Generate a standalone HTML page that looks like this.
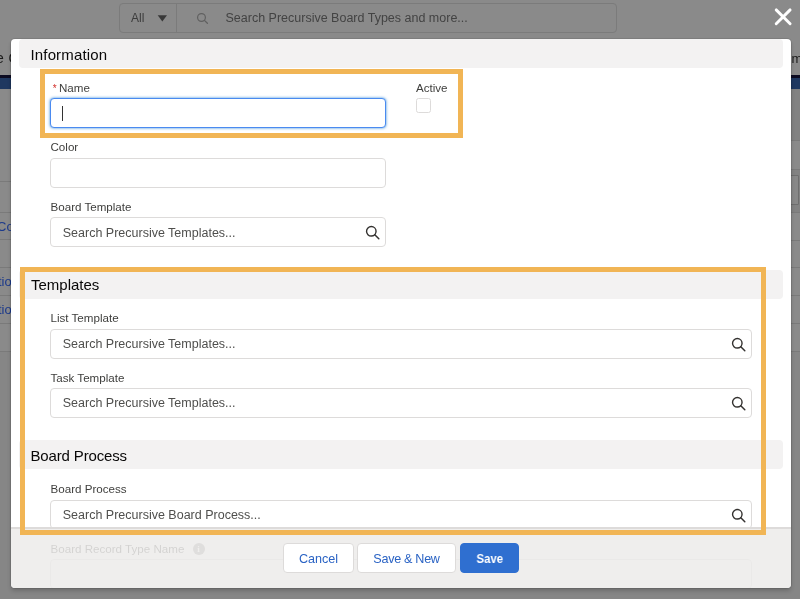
<!DOCTYPE html>
<html>
<head>
<meta charset="utf-8">
<title>New Precursive Board Type</title>
<style>
*{box-sizing:border-box;margin:0;padding:0}
html,body{width:800px;height:599px;overflow:hidden}
body{background:#8a8a8a;opacity:.999;font-family:"Liberation Sans",sans-serif;position:relative;color:#181818}
.abs{position:absolute}
/* background (dimmed page) */
.gsearch{will-change:transform;left:119px;top:3px;width:498px;height:30px;border:1px solid #7b7b7b;border-radius:4px;background:#8a8a8a}
.gsearch .div{left:56px;top:0;width:1px;height:28px;background:#7b7b7b}
.gsearch .all{left:11px;top:7px;font-size:12px;color:#3c3c3c}
.gsearch .ph{left:105.5px;top:6.5px;font-size:12.5px;color:#434343;white-space:nowrap}
.bgt{font-size:13px;line-height:16px;white-space:nowrap}
.hl1{height:1px;background:#7a7a7a}
.band{height:14px;top:75px;background:linear-gradient(#0c0b22 0,#0c0b22 2.6px,#1f3860 3px,#1f3860 100%)}
/* modal */
.modal{left:11px;top:39px;width:780px;height:549px;background:#fff;border-radius:4px;overflow:hidden}
.mshadow{left:11px;top:39px;width:780px;height:549px;border-radius:4px;box-shadow:0 0 1px 1px rgba(0,0,0,.10),0 3px 4px rgba(0,0,0,.18)}
.sec{left:8px;width:764px;height:29px;background:#f3f2f2;border-radius:4px}
.sec span{position:absolute;left:11.5px;top:6.3px;font-size:15px;line-height:18px;color:#080707;white-space:nowrap}
.lbl{font-size:11.6px;color:#3e3e3c;white-space:nowrap;line-height:14px}
.lbl i{color:#d2302b;font-style:normal;font-size:10px;line-height:10px;margin-right:2.3px;margin-left:.3px;position:relative;top:-.5px}
.inp{height:29.5px;border:1px solid #dddbda;border-radius:4px;background:#fff}
.inp.focus{border-color:#4a8af0;box-shadow:0 0 3px rgba(0,112,210,.8)}
.inp .ph{position:absolute;left:11.5px;top:7px;font-size:12.5px;color:#4f4f4d;white-space:nowrap;line-height:15px}
.inp svg{position:absolute;right:3.5px;top:6.9px}
.hl{border:5px solid #f1b555}
.cb{width:15px;height:15px;border:1px solid #dddbda;border-radius:2.5px;background:#fff}
.footer{will-change:transform;left:0;top:488px;width:780px;height:61px;background:rgba(236,235,234,.86);border-top:2px solid #dddbda}
.btn{height:30px;border:1px solid #dddbda;border-radius:4px;background:#fff;color:#2a63c4;font-size:12.6px;line-height:30px;text-align:center;white-space:nowrap}
.btn.brand{background:#2f6fd0;border-color:#2f6fd0;color:#fff;font-weight:bold}
</style>
</head>
<body>
<!-- dimmed background page -->
<div class="abs gsearch">
  <div class="abs all">All</div><svg class="abs" style="left:36px;top:10px" width="14" height="10" viewBox="0 0 14 10"><polygon points="1.7,1.3 11,1.3 6.35,7.4" fill="#383838"/></svg><div class="abs div"></div>
  <svg class="abs" style="left:76px;top:8px" width="16" height="16" viewBox="0 0 16 16"><circle cx="5.5" cy="5.5" r="3.9" fill="none" stroke="#606060" stroke-width="1.2"/><path d="M8.4 8.4 L11.4 11.3" stroke="#606060" stroke-width="1.3" stroke-linecap="round"/></svg>
  <div class="abs ph">Search Precursive Board Types and more...</div>
</div>
<div class="abs" style="left:0;top:352px;width:800px;height:247px;background:#868686"></div>
<!-- left strip of page behind -->
<div class="abs" style="left:0;top:0;width:12px;height:599px;overflow:hidden">
  <div class="abs bgt" style="left:-4px;top:50px;font-size:14px;color:#1b1b1b;letter-spacing:.4px">e C</div>
  <div class="abs band" style="left:0;width:12px"></div>
  <div class="abs hl1" style="left:0;width:12px;top:181px"></div>
  <div class="abs hl1" style="left:0;width:12px;top:212px"></div>
  <div class="abs hl1" style="left:0;width:12px;top:239px"></div>
  <div class="abs hl1" style="left:0;width:12px;top:267px"></div>
  <div class="abs hl1" style="left:0;width:12px;top:295px"></div>
  <div class="abs hl1" style="left:0;width:12px;top:323px"></div>
  <div class="abs hl1" style="left:0;width:12px;top:351px"></div>
  <div class="abs" style="left:0;width:12px;top:352px;height:247px;background:#868686"></div>
  <div class="abs bgt" style="left:-3px;top:219px;color:#1c3a8c">Co</div>
  <div class="abs bgt" style="left:-2px;top:274px;color:#1c3a8c">tio</div>
  <div class="abs bgt" style="left:-2px;top:302px;color:#1c3a8c">tio</div>
</div>
<!-- right strip of page behind -->
<div class="abs" style="left:790px;top:0;width:10px;height:599px;overflow:hidden">
  <div class="abs bgt" style="left:1.5px;top:50.5px;font-size:13px;color:#1b1b1b">m</div>
  <div class="abs band" style="left:0;width:10px"></div>
  <div class="abs" style="left:0;width:10px;top:89px;height:51px;background:#828282"></div>
  <div class="abs" style="left:0;width:10px;top:169px;height:43px;background:#828282"></div>
  <div class="abs" style="left:0;width:9px;top:175px;height:30px;border:1px solid #6e6e6e;border-radius:0 1px 1px 0;background:#888"></div>
  <div class="abs hl1" style="left:0;width:10px;top:140px"></div>
  <div class="abs hl1" style="left:0;width:10px;top:169px"></div>
  <div class="abs hl1" style="left:0;width:10px;top:212px"></div>
  <div class="abs hl1" style="left:0;width:10px;top:240px"></div>
  <div class="abs hl1" style="left:0;width:10px;top:267px"></div>
  <div class="abs hl1" style="left:0;width:10px;top:295px"></div>
  <div class="abs hl1" style="left:0;width:10px;top:323px"></div>
  <div class="abs hl1" style="left:0;width:10px;top:351px"></div>
  <div class="abs" style="left:0;width:10px;top:352px;height:247px;background:#868686"></div>
</div>
<!-- close X -->
<svg class="abs" style="left:773px;top:7px" width="20" height="20" viewBox="0 0 20 20"><path d="M3.2 2.9 L17.1 16.7 M17.1 2.9 L3.2 16.7" stroke="#fff" stroke-width="2.9" stroke-linecap="round"/></svg>

<div class="abs mshadow"></div>
<div class="abs modal">
  <div class="abs sec" style="top:0"><span style="letter-spacing:.15px;top:7px">Information</span></div>

  <div class="abs lbl" style="left:41.5px;top:42px"><i>*</i>Name</div>
  <div class="abs inp focus" style="left:39px;top:58.75px;width:336px;height:30.25px"><div class="abs" style="left:11px;top:7px;width:1px;height:15px;background:#333"></div></div>
  <div class="abs lbl" style="left:405px;top:42px">Active</div>
  <div class="abs cb" style="left:405px;top:59.3px"></div>

  <div class="abs lbl" style="left:39.5px;top:100.5px">Color</div>
  <div class="abs inp" style="left:39.25px;top:119.25px;width:335.5px"></div>

  <div class="abs lbl" style="left:39.5px;top:161px">Board Template</div>
  <div class="abs inp" style="left:39.25px;top:178.3px;width:335.5px"><div class="ph" style="top:7.8px">Search Precursive Templates...</div>
    <svg width="16" height="16" viewBox="0 0 16 16"><circle cx="6.3" cy="6.3" r="4.75" fill="none" stroke="#33312f" stroke-width="1.4"/><path d="M9.8 9.8 L13.8 13.7" stroke="#33312f" stroke-width="1.5" stroke-linecap="round"/></svg></div>

  <div class="abs sec" style="top:230.5px"><span style="left:12px">Templates</span></div>
  <div class="abs lbl" style="left:39.5px;top:271.5px">List Template</div>
  <div class="abs inp" style="left:39.25px;top:290px;width:701.5px"><div class="ph">Search Precursive Templates...</div>
    <svg width="16" height="16" viewBox="0 0 16 16"><circle cx="6.3" cy="6.3" r="4.75" fill="none" stroke="#33312f" stroke-width="1.4"/><path d="M9.8 9.8 L13.8 13.7" stroke="#33312f" stroke-width="1.5" stroke-linecap="round"/></svg></div>
  <div class="abs lbl" style="left:39.5px;top:331.5px">Task Template</div>
  <div class="abs inp" style="left:39.25px;top:349.1px;width:701.5px"><div class="ph" style="top:7.4px">Search Precursive Templates...</div>
    <svg width="16" height="16" viewBox="0 0 16 16"><circle cx="6.3" cy="6.3" r="4.75" fill="none" stroke="#33312f" stroke-width="1.4"/><path d="M9.8 9.8 L13.8 13.7" stroke="#33312f" stroke-width="1.5" stroke-linecap="round"/></svg></div>

  <div class="abs sec" style="top:401px"><span style="top:7px;letter-spacing:-0.15px">Board Process</span></div>
  <div class="abs lbl" style="left:39.5px;top:442.5px">Board Process</div>
  <div class="abs inp" style="left:39.25px;top:460.9px;width:701.5px"><div class="ph">Search Precursive Board Process...</div>
    <svg width="16" height="16" viewBox="0 0 16 16"><circle cx="6.3" cy="6.3" r="4.75" fill="none" stroke="#33312f" stroke-width="1.4"/><path d="M9.8 9.8 L13.8 13.7" stroke="#33312f" stroke-width="1.5" stroke-linecap="round"/></svg></div>

  <div class="abs lbl" style="left:39.5px;top:502.5px">Board Record Type Name</div>
  <div class="abs" style="left:181.5px;top:504px;width:12px;height:12px;border-radius:50%;background:#8f8d8b;color:#fff;font-size:9px;font-weight:bold;line-height:12px;text-align:center;font-family:'Liberation Serif',serif">i</div>
  <div class="abs inp" style="left:39.25px;top:520px;width:701.5px"></div>

  <div class="abs footer">
    <div class="abs btn" style="left:272px;top:14px;width:71px"><span class="t">Cancel</span></div>
    <div class="abs btn" style="left:346px;top:14px;width:99px;letter-spacing:-0.3px"><span class="t">Save &amp; New</span></div>
    <div class="abs btn brand" style="left:449px;top:14px;width:59px"><span class="t" style="display:inline-block;transform:scaleX(.9)">Save</span></div>
  </div>
</div>
<!-- annotation highlight boxes -->
<div class="abs hl" style="left:40px;top:69px;width:423px;height:69px"></div>
<div class="abs hl" style="left:19.5px;top:266.75px;width:746.5px;height:267.75px"></div>
</body>
</html>
